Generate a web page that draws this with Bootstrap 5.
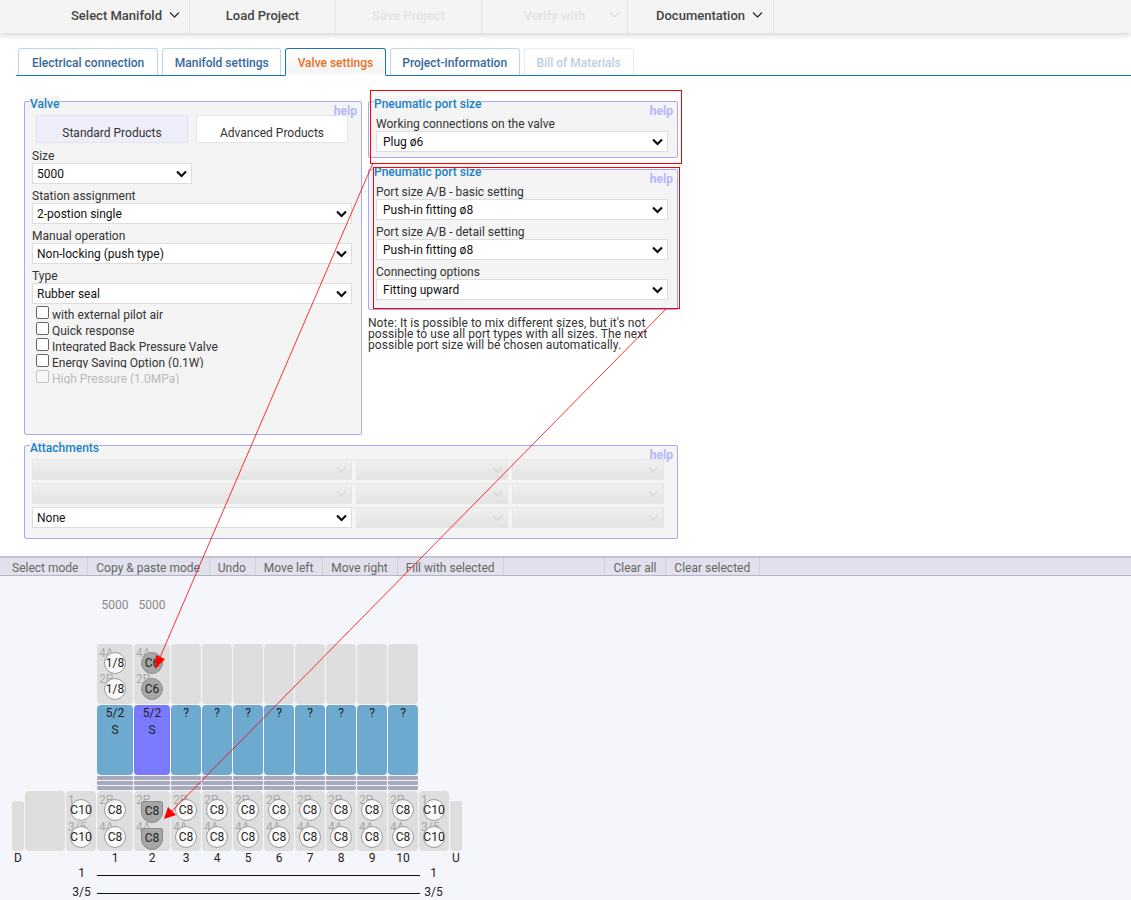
<!DOCTYPE html>
<html lang="en">
<head>
    <meta charset="UTF-8">
    <meta name="viewport" content="width=device-width, initial-scale=1.0">
    <title>Valve settings</title>
    <link href="https://cdn.jsdelivr.net/npm/bootstrap@5.3.0/dist/css/bootstrap.min.css" rel="stylesheet">
    <style>
        body { font-family: Roboto, "Liberation Sans", sans-serif; font-size: 12px; color: #333; height: 900px; overflow: hidden; background: #fff; }

        /* top menu */
        .top-menu { height: 33px; background: #f4f4f4; padding: 0 0 0 44px; box-shadow: 0 2px 6px rgba(0,0,0,.18); flex-wrap: nowrap; justify-content: flex-start; }
        .menu-item { width: 146px; height: 33px; padding-bottom: 2px; border-right: 1px solid #e4e4e4; font-size: 13px; font-weight: 500; color: #444; }
        .menu-item.off { color: #e3e3e3; }
        .menu-item svg { position: absolute; left: 100%; top: 5px; margin-left: 7px; }
        .menu-item.off svg { margin-left: 24px; }

        /* tabs */
        .tabs { margin: 15px 0 0 16px; padding-left: 2px; border-bottom: 1px solid #1a75b5; gap: 4px; height: 28px; }
        .tabs .nav-link { height: 27px; padding: 0 11.5px; line-height: 28px; font-size: 12px; font-weight: 500; color: #37689b; border: 1px solid #bcd6ea; border-bottom: 0; border-radius: 3px 3px 0 0; margin: 0; background: #fff; }
        .tabs .nav-item:first-child .nav-link { padding: 0 13px; }
        .tabs .nav-link.active { height: 28px; color: #e8701f; border-color: #1a75b5; border-bottom: 1px solid #fff; background: linear-gradient(#fff, #f4f4f4 90%, #fff); }
        .tabs .nav-link.disabled { padding: 0 12px; color: #bccfdf; border-color: #e2eef6; }

        /* settings panels */
        .workspace { height: 480px; padding: 25px 0 0 24px; }
        .panel { position: relative; background: #f4f4f4; border: 1px solid #a8a8f4; border-radius: 2px; }
        .panel-title { position: absolute; left: 5px; top: -6px; padding: 0; height: 16px; line-height: 16px; background: #f4f4f4; color: #1a80c4; font-weight: 500; }
        .panel-help { position: absolute; right: 4px; top: 1px; line-height: 16px; color: #b6b6ff; font-weight: 700; }
        .panel-valve { width: 338px; height: 334px; padding: 13px 9px 0 7px; }
        .panel-port { width: 310px; padding: 10px 9px 5px 7px; }
        .panel-port + .panel-port { margin-top: 11px; padding-bottom: 9px; }
        .panel-attach { width: 654px; height: 94px; margin-top: 10px; padding: 13px 13px 0 7px; }
        .side-col { width: 310px; margin-left: 6px; }
        .product-row { padding-bottom: 1px; }
        .product-btn { width: 152px; height: 28px; padding: 7px 0 0; margin-left: 4px; font-size: 12px; line-height: 18px; color: #333; border: 1px solid #e4e4e4; border-radius: 0; background: #fff; }
        .product-btn.active { background: #eeeefa; color: #333; border-color: #e4e4ee; }
        .field-label { margin: 5px 0 0; line-height: 14px; display: block; }
        .panel .form-select { height: 21px; padding: 0 16px 0 4px; font-size: 12px; color: #111; border: 1px solid #ddd; border-radius: 0; background-color: #fff; background-position: right 4px center; background-size: 11px 8px; background-image: url("data:image/svg+xml,%3csvg xmlns='http://www.w3.org/2000/svg' viewBox='0 0 11 8'%3e%3cpath fill='none' stroke='%23111' stroke-width='2.2' d='M1 1.5l4.5 4.5 4.5-4.5'/%3e%3c/svg%3e"); }
        .panel-port .form-select { padding-left: 6px; }
        .panel .form-select:disabled { background-color: #e8e8e8; background-image: url("data:image/svg+xml,%3csvg xmlns='http://www.w3.org/2000/svg' viewBox='0 0 11 8'%3e%3cpath fill='none' stroke='%23dcdcdc' stroke-width='2' d='M1 1.5l4.5 4.5 4.5-4.5'/%3e%3c/svg%3e"), linear-gradient(#f0f0f0, #e3e3e3); background-size: 11px 8px, 100% 100%; background-position: right 4px center, 0 0; border-color: #e6e6e6; }
        .select-size { width: 160px; }
        .select-wide { width: 320px; }
        .select-small { width: 152px; }
        .checks { margin: 3px 0 0 4px; }
        .check-row { height: 16px; }
        .check-row .form-check-input { width: 13px; height: 13px; margin: -1px 3px 0 0; border: 1px solid #666; border-radius: 2px; background-color: #fff; flex: none; }
        .check-row .form-check-input:disabled { opacity: .35; }
        .check-row label { height: 13px; line-height: 17px; overflow: hidden; }
        .check-row:first-child label { height: 17px; }
        .check-row.off label { color: #bbb; }
        .note { margin: 8px 0 0; line-height: 11px; width: 290px; letter-spacing: .06px; }
        .select-gap { gap: 3px; }

        /* manifold toolbar */
        .tool-bar { height: 20px; background: #e1e1ed; border-top: 2px solid #c2c2d0; border-bottom: 1px solid #b4b4c4; line-height: 20px; color: #666; }
        .tool-bar span { height: 17px; padding: 0 8.85px 0 8px; border-right: 1px solid #cfcfdd; white-space: nowrap; }
        .tool-bar span:first-child { padding-left: 12px; }
        .tool-bar .push { margin-left: 100px; border-left: 1px solid #cfcfdd; }

        /* manifold canvas */
        .canvas { height: 324px; background: #f5f6fc; padding: 21px 0 0 12px; }
        .rail { gap: 1px; }
        .size-row { height: 16px; line-height: 16px; color: #888; margin-bottom: 31px; }
        .st { width: 30px; flex: none; }
        .st.wide { width: 36px; }
        .st.d-end { width: 12px; }
        .st.filler { width: 40px; }
        .st.pad { width: 84px; }
        .block { position: relative; background: #dedede; border-radius: 4px; height: 60px; padding-top: 8px; }
        .block.d-end, .block.filler { padding: 0; }
        .block.d-end { height: 50px; margin-top: 10px; border-radius: 3px; }
        .top-row { margin-bottom: 1px; }
        .top-row .port + .port { margin-top: 4px; }
        .bottom-row .port + .port { margin-top: 5px; }
        .port { position: relative; height: 22px; display: flex; justify-content: center; text-align: center; }
        .port-name { position: absolute; left: 2px; top: -6px; line-height: 14px; color: #aaa; }
        .ring { position: relative; width: 22px; height: 22px; border: 1.5px solid #9c9c9c; border-radius: 50%; background: #f9f9f9; color: #222; line-height: 21px; white-space: nowrap; display: flex; justify-content: center; }
        .ring.on { background: #a6a6a6; border-color: #8f8f8f; }
        .shield { position: relative; width: 22px; height: 22px; margin-top: 2px; line-height: 18px; border: 1px solid #8a8a8a; border-radius: 2px 2px 11px 11px; background: #a6a6a6; color: #222; }
        .valve { height: 70px; background: #6eaacf; border-radius: 4px; text-align: center; line-height: 17px; color: #222; margin-bottom: 1px; }
        .valve.on { background: #7a7aff; }
        .bar { height: 4px; background: #a9a9be; border-radius: 1px; margin-bottom: 1px; }
        .num-row { height: 14px; line-height: 14px; margin-bottom: -1px; color: #222; text-align: center; }
        .line-row { height: 19px; line-height: 19px; color: #222; text-align: center; }
        .line-tag { width: 31px; margin-left: 54px; }
        .line-end { width: 27px; }
        .line-rule { width: 323px; height: 1px; background: #111; margin-top: 11px; }
        .line-row + .line-row .line-rule { margin-top: 10px; }
        .notes { position: absolute; left: 0; top: 0; pointer-events: none; }
    </style>
</head>
<body>
    <nav class="navbar top-menu">
        <div class="menu-item d-flex align-items-center justify-content-center"><span class="position-relative">Select Manifold<svg width="11" height="8" viewBox="0 0 11 8"><path d="M1 1.5l4.5 4.5 4.5-4.5" fill="none" stroke="#333" stroke-width="1.3"/></svg></span></div>
        <div class="menu-item d-flex align-items-center justify-content-center">Load Project</div>
        <div class="menu-item off d-flex align-items-center justify-content-center">Save Project</div>
        <div class="menu-item off d-flex align-items-center justify-content-center"><span class="position-relative">Verify with<svg width="11" height="8" viewBox="0 0 11 8"><path d="M1 1.5l4.5 4.5 4.5-4.5" fill="none" stroke="#dcdcdc" stroke-width="1.3"/></svg></span></div>
        <div class="menu-item d-flex align-items-center justify-content-center"><span class="position-relative">Documentation<svg width="11" height="8" viewBox="0 0 11 8"><path d="M1 1.5l4.5 4.5 4.5-4.5" fill="none" stroke="#333" stroke-width="1.3"/></svg></span></div>
    </nav>

    <ul class="nav nav-tabs tabs">
        <li class="nav-item"><a class="nav-link" href="#">Electrical connection</a></li>
        <li class="nav-item"><a class="nav-link" href="#">Manifold settings</a></li>
        <li class="nav-item"><a class="nav-link active" href="#">Valve settings</a></li>
        <li class="nav-item"><a class="nav-link" href="#">Project-information</a></li>
        <li class="nav-item"><a class="nav-link disabled" href="#">Bill of Materials</a></li>
    </ul>

    <div class="workspace">
        <div class="d-flex">
            <section class="panel panel-valve">
                <div class="panel-title">Valve</div>
                <div class="panel-help">help</div>
                <div class="d-flex gap-2 product-row">
                    <button type="button" class="btn product-btn active">Standard Products</button>
                    <button type="button" class="btn product-btn m-0">Advanced Products</button>
                </div>
                <label class="field-label">Size</label>
                <select class="form-select select-size"><option>5000</option></select>
                <label class="field-label">Station assignment</label>
                <select class="form-select select-wide"><option>2-postion single</option></select>
                <label class="field-label">Manual operation</label>
                <select class="form-select select-wide"><option>Non-locking (push type)</option></select>
                <label class="field-label">Type</label>
                <select class="form-select select-wide"><option>Rubber seal</option></select>
                <div class="checks">
                    <div class="check-row d-flex"><input class="form-check-input" type="checkbox"><label>with external pilot air</label></div>
                    <div class="check-row d-flex"><input class="form-check-input" type="checkbox"><label>Quick response</label></div>
                    <div class="check-row d-flex"><input class="form-check-input" type="checkbox"><label>Integrated Back Pressure Valve</label></div>
                    <div class="check-row d-flex"><input class="form-check-input" type="checkbox"><label>Energy Saving Option (0.1W)</label></div>
                    <div class="check-row off d-flex"><input class="form-check-input" type="checkbox" disabled><label>High Pressure (1.0MPa)</label></div>
                </div>
            </section>
            <div class="side-col">
                <section class="panel panel-port">
                    <div class="panel-title">Pneumatic port size</div>
                    <div class="panel-help">help</div>
                    <label class="field-label">Working connections on the valve</label>
                    <select class="form-select"><option>Plug ø6</option></select>
                </section>
                <section class="panel panel-port">
                    <div class="panel-title">Pneumatic port size</div>
                    <div class="panel-help">help</div>
                    <label class="field-label">Port size A/B - basic setting</label>
                    <select class="form-select"><option>Push-in fitting ø8</option></select>
                    <label class="field-label">Port size A/B - detail setting</label>
                    <select class="form-select"><option>Push-in fitting ø8</option></select>
                    <label class="field-label">Connecting options</label>
                    <select class="form-select"><option>Fitting upward</option></select>
                </section>
                <p class="note">Note: It is possible to mix different sizes, but it's not possible to use all port types with all sizes. The next possible port size will be chosen automatically.</p>
            </div>
        </div>
        <section class="panel panel-attach">
            <div class="panel-title">Attachments</div>
            <div class="panel-help">help</div>
            <div class="d-flex flex-column select-gap">
                <div class="d-flex gap-1"><select class="form-select select-wide" disabled></select><select class="form-select select-small" disabled></select><select class="form-select select-small" disabled></select></div>
                <div class="d-flex gap-1"><select class="form-select select-wide" disabled></select><select class="form-select select-small" disabled></select><select class="form-select select-small" disabled></select></div>
                <div class="d-flex gap-1"><select class="form-select select-wide"><option>None</option></select><select class="form-select select-small" disabled></select><select class="form-select select-small" disabled></select></div>
            </div>
        </section>
    </div>

    <div class="tool-bar d-flex">
        <span>Select mode</span><span>Copy &amp; paste mode</span><span>Undo</span><span>Move left</span><span>Move right</span><span>Fill with selected</span><span class="push">Clear all</span><span>Clear selected</span>
    </div>

    <div class="canvas" id="canvas"></div>

    <svg class="notes" width="1131" height="900" viewBox="0 0 1131 900">
        <rect x="370.5" y="90.5" width="311" height="73" fill="none" stroke="#f00"/>
        <rect x="373.5" y="167.5" width="306" height="141" fill="none" stroke="#f00"/>
        <path d="M373 163L158 662" stroke="#f00" stroke-opacity=".8" fill="none"/>
        <path d="M666 309L171 812" stroke="#f00" stroke-opacity=".8" fill="none"/>
        <polygon points="155,669 156,655 165,659" fill="#f00"/>
        <polygon points="164,819 168,807 176,815" fill="#f00"/>
    </svg>

    <script>
        // 10 stations, the first two have a valve assigned, station 2 is selected
        const stations = [1, 2, 3, 4, 5, 6, 7, 8, 9, 10].map(n => ({
            n, wide: n < 3, selected: n === 2, valve: n < 3 ? ['5/2', 'S'] : ['?']
        }));
        const cls = s => 'st' + (s.wide ? ' wide' : '');

        const ring = (name, text, on) =>
            `<div class="port"><span class="port-name">${name}</span><div class="ring${on ? ' on' : ''}">${text}</div></div>`;
        const shield = (name, text) =>
            `<div class="port"><span class="port-name">${name}</span><div class="shield">${text}</div></div>`;

        const sizes = stations.filter(s => s.wide).map(s => `<div class="${cls(s)} text-center">5000</div>`).join('');
        const tops = stations.map(s => {
            let inner = '';
            if (s.wide) inner = s.selected ? ring('4A', 'C6', true) + ring('2P', 'C6', true) : ring('4A', '1/8') + ring('2P', '1/8');
            return `<div class="${cls(s)}"><div class="block">${inner}</div></div>`;
        }).join('');
        const valves = stations.map(s => `<div class="${cls(s)}"><div class="valve${s.selected ? ' on' : ''}">${s.valve.join('<br>')}</div></div>`).join('');
        const bars = stations.map(s => `<div class="${cls(s)}"><div class="bar"></div><div class="bar"></div><div class="bar"></div></div>`).join('');
        const bottoms = stations.map(s => `<div class="${cls(s)}"><div class="block">${s.selected ? shield('2P', 'C8') + shield('4A', 'C8') : ring('2P', 'C8') + ring('4A', 'C8')}</div></div>`).join('');
        const nums = stations.map(s => `<div class="${cls(s)}">${s.n}</div>`).join('');
        const endBlock = `<div class="st"><div class="block">${ring('1', 'C10') + ring('3/5', 'C10')}</div></div>`;

        document.getElementById('canvas').innerHTML = `
            <div class="rail d-flex size-row"><div class="st pad"></div>${sizes}</div>
            <div class="rail d-flex top-row"><div class="st pad"></div>${tops}</div>
            <div class="rail d-flex"><div class="st pad"></div>${valves}</div>
            <div class="rail d-flex"><div class="st pad"></div>${bars}</div>
            <div class="rail d-flex bottom-row">
                <div class="st d-end"><div class="block d-end"></div></div>
                <div class="st filler"><div class="block filler"></div></div>
                ${endBlock}${bottoms}${endBlock}
                <div class="st d-end"><div class="block d-end"></div></div>
            </div>
            <div class="rail d-flex num-row">
                <div class="st d-end">D</div><div class="st filler"></div><div class="st"></div>
                ${nums}
                <div class="st"></div><div class="st d-end">U</div>
            </div>
            <div class="d-flex line-row"><div class="line-tag">1</div><div class="line-rule"></div><div class="line-end">1</div></div>
            <div class="d-flex line-row"><div class="line-tag">3/5</div><div class="line-rule"></div><div class="line-end">3/5</div></div>`;
    </script>
    <script src="https://cdn.jsdelivr.net/npm/bootstrap@5.3.0/dist/js/bootstrap.bundle.min.js"></script>
</body>
</html>
